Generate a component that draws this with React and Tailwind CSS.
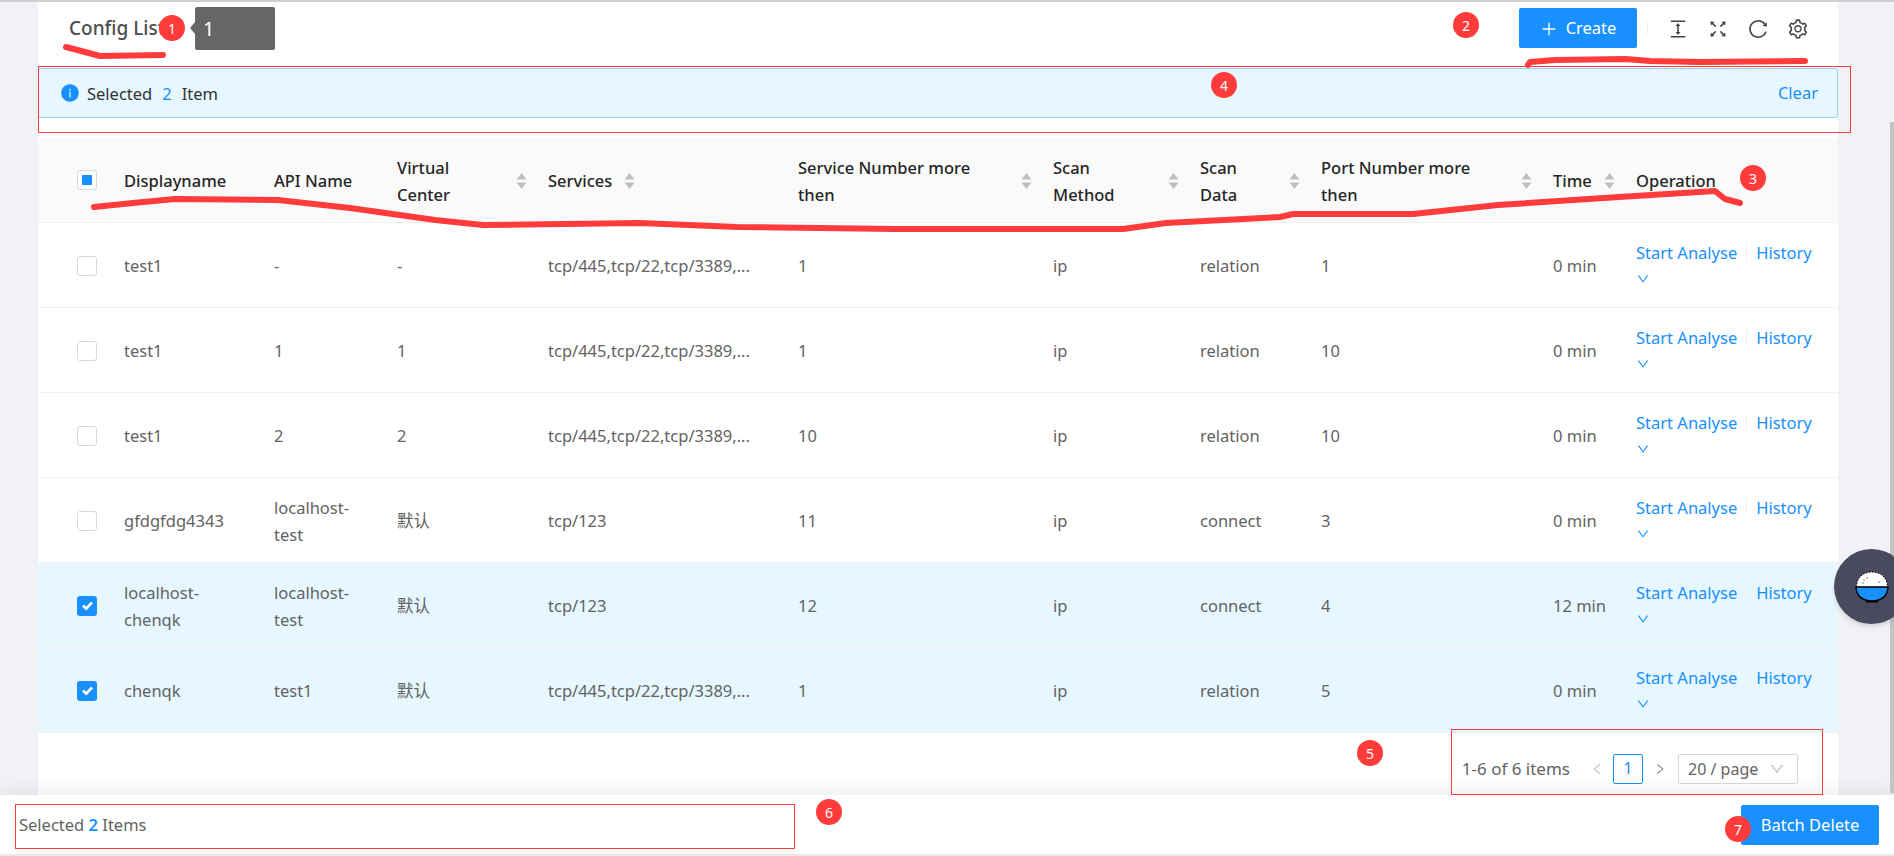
import React from 'react';
import {
    AiFillInfoCircle,
    AiOutlineColumnHeight,
    AiOutlineDown,
    AiOutlineFullscreen,
    AiOutlineLeft,
    AiOutlinePlus,
    AiOutlineReload,
    AiOutlineRight,
    AiOutlineSetting,
} from 'react-icons/ai';

const SERVICES = 'tcp/445,tcp/22,tcp/3389,...';

const rows = [
    { name: 'test1', api: '-', center: '-', services: SERVICES, number: '1', method: 'ip', data: 'relation', port: '1', time: '0 min' },
    { name: 'test1', api: '1', center: '1', services: SERVICES, number: '1', method: 'ip', data: 'relation', port: '10', time: '0 min' },
    { name: 'test1', api: '2', center: '2', services: SERVICES, number: '10', method: 'ip', data: 'relation', port: '10', time: '0 min' },
    { name: 'gfdgfdg4343', api: 'localhost-test', center: '默认', services: 'tcp/123', number: '11', method: 'ip', data: 'connect', port: '3', time: '0 min' },
    { name: 'localhost-chenqk', api: 'localhost-test', center: '默认', services: 'tcp/123', number: '12', method: 'ip', data: 'connect', port: '4', time: '12 min', selected: true },
    { name: 'chenqk', api: 'test1', center: '默认', services: SERVICES, number: '1', method: 'ip', data: 'relation', port: '5', time: '0 min', selected: true },
];

const columns = [
    { title: 'Displayname', width: 'w-[150px]' },
    { title: 'API Name', width: 'w-[123px]' },
    { title: 'Virtual\nCenter', width: 'w-[151px]', sort: true },
    { title: 'Services', width: 'w-[250px]', sort: true, inline: true },
    { title: 'Service Number more\nthen', width: 'w-[255px]', sort: true },
    { title: 'Scan\nMethod', width: 'w-[147px]', sort: true },
    { title: 'Scan\nData', width: 'w-[121px]', sort: true },
    { title: 'Port Number more\nthen', width: 'w-[232px]', sort: true },
    { title: 'Time', width: 'w-[83px]', sort: true },
    { title: 'Operation', width: 'w-[218px]' },
];

const badges = [
    { n: 1, className: 'left-[159px] top-[15px]' },
    { n: 2, className: 'left-[1453px] top-[12px]' },
    { n: 3, className: 'left-[1740px] top-[165px]' },
    { n: 4, className: 'left-[1211px] top-[72px]' },
    { n: 5, className: 'left-[1357px] top-[740px]' },
    { n: 6, className: 'left-[816px] top-[799px]' },
    { n: 7, className: 'left-[1725px] top-[816px]' },
];

function SortIcon() {
    return (
        <svg width="11" height="18" viewBox="0 0 11 18" className="shrink-0 text-[#bfbfbf]" fill="currentColor">
            <path d="M5.5 1 L10.5 7.5 L0.5 7.5 Z" />
            <path d="M5.5 17 L10.5 10.5 L0.5 10.5 Z" />
        </svg>
    );
}

function Checkbox({ state }) {
    if (state === 'checked') {
        return (
            <span className="flex h-5 w-5 items-center justify-center rounded-[3px] bg-[#1890ff]">
                <svg width="13" height="13" viewBox="0 0 13 13" fill="none" stroke="white" strokeWidth="2.6">
                    <path d="M2 6.5 L5.2 9.7 L11 3.5" />
                </svg>
            </span>
        );
    }
    if (state === 'partial') {
        return (
            <span className="flex h-5 w-5 items-center justify-center rounded-[3px] border border-[#d9d9d9] bg-white">
                <span className="h-[10px] w-[10px] bg-[#1890ff]" />
            </span>
        );
    }
    return <span className="block h-5 w-5 rounded-[3px] border border-[#d9d9d9] bg-white" />;
}

function RiceBowl() {
    return (
        <svg width="34" height="32" viewBox="0 0 34 32">
            <path d="M1.5 16 C1.5 6 9 1 17 1 C25 1 32.5 6 32.5 16 Z" fill="white" stroke="black" strokeWidth="1" strokeDasharray="1.5 1.5" />
            <path d="M1 16 H33 C33 25 26 30 17 30 C8 30 1 25 1 16 Z" fill="#1890ff" stroke="black" strokeWidth="1.4" />
            <rect x="11" y="29" width="12" height="2.5" fill="black" />
            <circle cx="9" cy="9" r="0.7" fill="#555" />
            <circle cx="12" cy="7" r="0.7" fill="#555" />
            <circle cx="8" cy="12" r="0.7" fill="#555" />
            <circle cx="24" cy="11" r="0.7" fill="#555" />
        </svg>
    );
}

function Annotations() {
    return (
        <div className="pointer-events-none absolute inset-0">
            <svg width="1894" height="856" viewBox="0 0 1894 856" className="absolute left-0 top-0" fill="none" stroke="#ff3b3b" strokeWidth="6" strokeLinecap="round" strokeLinejoin="round">
                <path d="M66 47 L85 52 L100 56 L163 55" />
                <path d="M1528 65 L1530 62 L1555 60 L1625 59 L1650 61 L1700 62 L1805 61" />
                <path d="M94 207 L133 203 L175 199 L278 200 L350 208 L435 220 L483 225 L640 223 L737 227 L894 229 L1123 229 L1166 223 L1280 217 L1293 214 L1413 214 L1498 205 L1619 197 L1715 191 L1725 199 L1740 203" />
            </svg>
            <div className="absolute left-[38px] top-[66px] h-[67px] w-[1813px] border border-[#ff3b3b]" />
            <div className="absolute left-[1451px] top-[729px] h-[66px] w-[372px] border border-[#ff3b3b]" />
            <div className="absolute left-[15px] top-[804px] h-[45px] w-[780px] border border-[#ff3b3b]" />
            {badges.map(b => (
                <span key={b.n} className={`absolute flex h-[26px] w-[26px] items-center justify-center rounded-full bg-[#ff3b3b] text-[14px] text-white ${b.className}`}>
                    {b.n}
                </span>
            ))}
            <div className="absolute left-[195px] top-[7px] flex h-[43px] w-[80px] items-center rounded-[2px] bg-[#666666] pl-[8px] text-[20px] text-white">
                1
            </div>
            <div className="absolute left-[190px] top-[22px] h-0 w-0 border-y-[6px] border-r-[5px] border-y-transparent border-r-[#666666]" />
        </div>
    );
}

export default function App() {
    return (
        <div className="relative flex h-[856px] w-[1894px] flex-col overflow-hidden bg-[#f0f2f5] font-['Noto_Sans','Noto_Sans_CJK_SC',sans-serif] text-[16.5px] text-[#636363]">
            <div className="h-[2px] shrink-0 bg-[#d0d0d0]" />
            <main className="ml-[38px] mr-[56px] flex-1 bg-white">
                <div className="flex h-[66px] items-start justify-between pl-[31px] pr-[29px]">
                    <h1 className="mt-[13px] text-[19px] font-medium leading-[27px] text-[#4d4d4d]">Config List</h1>
                    <div className="mt-[6px] flex h-[40px] items-center">
                        <button className="flex h-[40px] w-[118px] items-center justify-center gap-[8px] rounded-[2px] bg-[#1890ff] pt-px text-white">
                            <AiOutlinePlus size={18} />
                            Create
                        </button>
                        <span className="ml-[10px] mr-[19px] h-[14px] w-px bg-[#f0f0f0]" />
                        <div className="mt-px flex items-center gap-[18px] text-[#434343]">
                            <AiOutlineColumnHeight size={22} />
                            <AiOutlineFullscreen size={22} />
                            <AiOutlineReload size={22} />
                            <AiOutlineSetting size={22} />
                        </div>
                    </div>
                </div>

                <div className="flex h-[50px] items-center justify-between rounded-[2px] border border-[#91d5ff] bg-[#e6f7ff] pl-[21px] pr-[19px]">
                    <div className="flex items-center leading-[27px] text-[#333]">
                        <AiFillInfoCircle size={20} className="text-[#1890ff]" />
                        <span className="ml-[7px]">Selected</span>
                        <span className="ml-[10px] text-[#1890ff]">2</span>
                        <span className="ml-[10px]">Item</span>
                    </div>
                    <a className="text-[#1890ff]">Clear</a>
                </div>

                <table className="mt-[20px] w-[1800px] table-fixed border-collapse">
                    <thead>
                        <tr className="h-[84px] border-b border-[#f0f0f0] bg-[#fafafa]">
                            <th className="w-[70px] pl-[39px] text-left">
                                <Checkbox state="partial" />
                            </th>
                            {columns.map(col => (
                                <th key={col.title} className={`${col.width} pl-4 pr-[5px] pt-[2px] text-left font-medium leading-[27px] text-[#262626]`}>
                                    <div className={col.inline ? 'flex items-center gap-[12px]' : 'flex items-center justify-between'}>
                                        <span className="whitespace-pre-line">{col.title}</span>
                                        {col.sort && <SortIcon />}
                                    </div>
                                </th>
                            ))}
                        </tr>
                    </thead>
                    <tbody>
                        {rows.map((row, i) => (
                            <tr key={i} className={`h-[85px] border-b border-[#f0f0f0] leading-[27px] ${row.selected ? 'bg-[#e6f7ff]' : 'bg-white'}`}>
                                <td className="pl-[39px] pt-[2px]">
                                    <Checkbox state={row.selected ? 'checked' : 'empty'} />
                                </td>
                                <td className="pl-4 pr-4 pt-[2px]">{row.name}</td>
                                <td className="pl-4 pr-4 pt-[2px]">{row.api}</td>
                                <td className="pl-4 pr-4 pt-[2px]">{row.center}</td>
                                <td className="pl-4 pr-4 pt-[2px]">{row.services}</td>
                                <td className="pl-4 pr-4 pt-[2px]">{row.number}</td>
                                <td className="pl-4 pr-4 pt-[2px]">{row.method}</td>
                                <td className="pl-4 pr-4 pt-[2px]">{row.data}</td>
                                <td className="pl-4 pr-4 pt-[2px]">{row.port}</td>
                                <td className="pl-4 pr-2 pt-[2px]">{row.time}</td>
                                <td className="pl-4 pr-2 align-top text-[#1890ff]">
                                    <div className="mt-[16px] flex items-center">
                                        <span>Start Analyse</span>
                                        <span className="mx-[9px] h-[16px] w-px bg-[#f0f0f0]" />
                                        <span>History</span>
                                    </div>
                                    <AiOutlineDown size={14} className="mt-[6px]" />
                                </td>
                            </tr>
                        ))}
                    </tbody>
                </table>

                <div className="mt-[21px] flex h-[30px] items-center justify-end pr-[40px]">
                    <span className="text-[17px]">1-6 of 6 items</span>
                    <AiOutlineLeft size={14} className="ml-[20px] text-[#bfbfbf]" />
                    <span className="ml-[9px] flex h-[30px] w-[30px] items-center justify-center rounded-[2px] border border-[#1890ff] text-[#1890ff]">1</span>
                    <AiOutlineRight size={14} className="ml-[10px] text-[#8c8c8c]" />
                    <span className="ml-[11px] flex h-[30px] w-[120px] items-center justify-between rounded-[2px] border border-[#d9d9d9] pl-[9px] pr-[12px] text-[16px]">
                        20 / page
                        <AiOutlineDown size={16} className="text-[#bfbfbf]" />
                    </span>
                </div>
            </main>

            <footer className="relative flex h-[61px] shrink-0 items-center justify-between border-b-2 border-[#e8e8e8] bg-white pl-[19px] pr-[15px] pt-px shadow-[0_-6px_16px_rgba(0,0,0,0.06)]">
                <span>Selected <b className="font-semibold text-[#1890ff]">2</b> Items</span>
                <button className="h-[40px] w-[138px] rounded-[2px] bg-[#1890ff] text-white">Batch Delete</button>
            </footer>

            <div className="absolute left-[1890px] top-[122px] h-[671px] w-[4px] bg-[#c4c4c4]" />
            <div className="absolute left-[1834px] top-[549px] flex h-[75px] w-[75px] items-center justify-center rounded-full bg-[#4a4a5e] shadow-md">
                <RiceBowl />
            </div>
            <Annotations />
        </div>
    );
}
